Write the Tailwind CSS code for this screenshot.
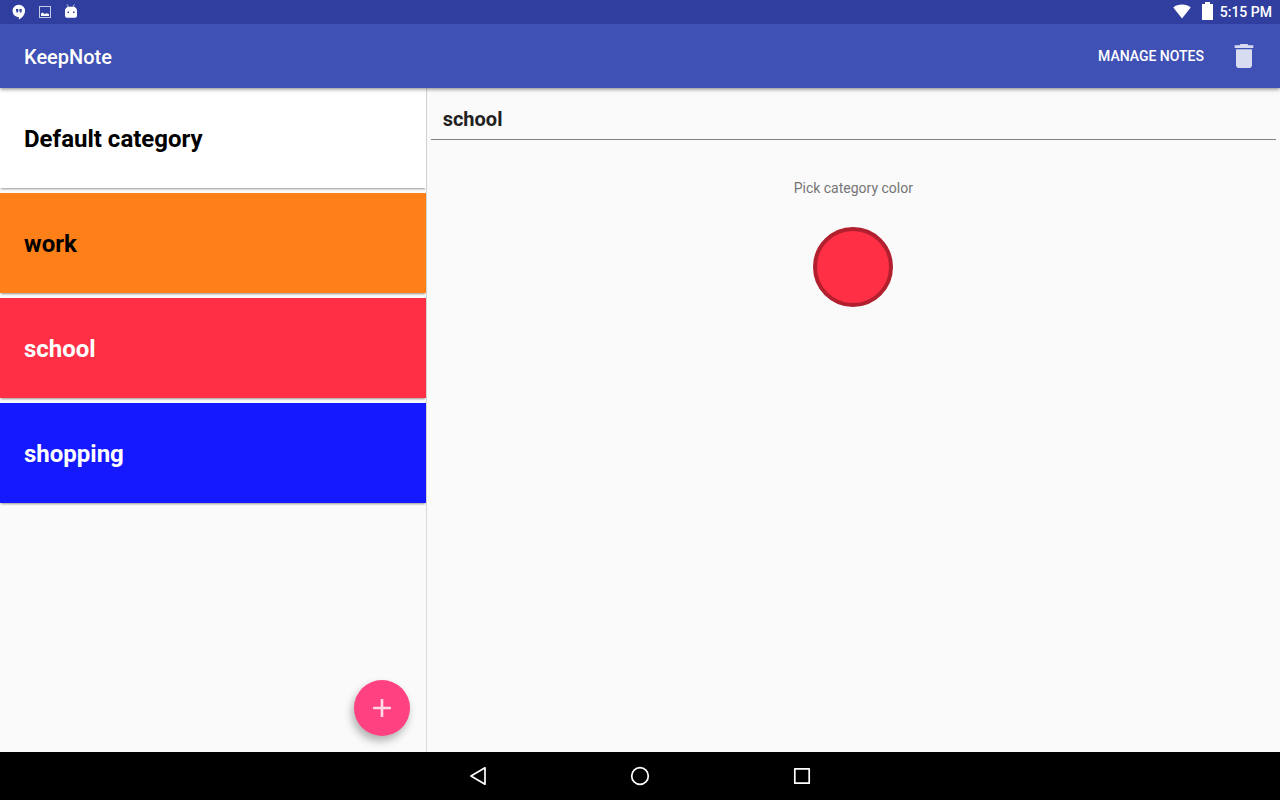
<!DOCTYPE html>
<html lang="en">
<head>
  <meta charset="UTF-8">
  <meta name="viewport" content="width=device-width, initial-scale=1.0">
  <title>KeepNote</title>
  <script src="https://cdn.jsdelivr.net/npm/@tailwindcss/browser@4"></script>
</head>

<body class="font-[Roboto,sans-serif]">
  <div class="h-screen flex flex-col bg-[#fafafa]">

    <!-- status bar -->
    <div class="relative z-20 h-6 shrink-0 flex items-center justify-between pl-3 pr-2 bg-[#303f9f] text-white">
      <div class="flex items-center gap-3">
        <svg class="w-3.5 h-4" viewBox="0 0 14 16" fill="currentColor">
          <path d="M6.800 .8A6 6 0 0 0 .6 7c0 3.400 2.700 6 6.200 6v2.500c3.500-1.700 6.200-4.900 6.200-8.500A6 6 0 0 0 6.800.8z"/>
          <path d="M4 5h2.300v2.500L5.500 8.800h-1L5 7.500H4zM7.400 5h2.300v2.500l-.8 1.300h-1l.5-1.300h-1z" fill="#303f9f"/>
        </svg>
        <svg class="w-3.5 h-4" viewBox="0 0 14 16" fill="none">
          <rect x="1.500" y="2.500" width="11" height="11" stroke="#c5cae9"/>
          <path d="M3 12V9.500l1.500-1L6.500 10l2-.8L11 10v2z" fill="white"/>
        </svg>
        <svg class="w-3.5 h-4" viewBox="0 0 14 16" fill="currentColor">
          <path d="M3.200.5l1.500 3M10.300.5l-1.500 3" stroke="#c5cae9"/>
          <path d="M1 7c0-2.700 1.500-4.300 4-4.300h4c2.500 0 4 1.600 4 4.300v4.500c0 1.500-1 2.300-2.500 2.300h-7C2 13.800 1 13 1 11.500z"/>
          <path d="M3.500 7.500H5V9H3.500zM9 7.500h1.500V9H9z" fill="#303f9f"/>
        </svg>
      </div>
      <div class="flex items-center">
        <svg class="w-[18px] h-4" viewBox="0 0 18 16" fill="currentColor">
          <path d="M9 14.500L.3 3.500C2.600 1.300 5.700.5 9 .5s6.400.8 8.700 3z"/>
        </svg>
        <svg class="w-[11px] h-5 ml-[11px] mr-[7px]" viewBox="0 0 11 20" fill="currentColor">
          <path d="M3 0h5v2h3v16H0V2h3z"/>
        </svg>
        <span class="text-sm font-medium">5:15 PM</span>
      </div>
    </div>

    <!-- app bar -->
    <header class="relative z-10 h-16 shrink-0 flex items-center justify-between pl-6 pr-5 bg-[#3f51b5] text-white shadow-[0_1px_4px_rgba(0,0,0,0.5)]">
      <h1 class="pt-0.5 text-xl font-medium">KeepNote</h1>
      <div class="flex items-center gap-6">
        <button type="button" class="text-sm font-medium">MANAGE NOTES</button>
        <button type="button" aria-label="Delete category">
          <svg class="w-8 h-8" viewBox="0 0 24 24" fill="white" fill-opacity="0.8">
            <path d="M6 19c0 1.100.9 2 2 2h8c1.100 0 2-.9 2-2V7H6v12zM19 4h-3.500l-1-1h-5l-1 1H5v2h14V4z"/>
          </svg>
        </button>
      </div>
    </header>

    <main class="flex-1 min-h-0 flex">
      <!-- categories -->
      <section class="relative w-1/3 shrink-0 border-r border-[#d8d8d8]">
        <ul class="flex flex-col gap-[5px] text-2xl font-bold">
          <li class="shadow-[0_2px_2px_-1px_rgba(0,0,0,0.4)]"><a href="#" class="flex items-center h-[100px] px-6 pt-0.5 bg-white text-black">Default category</a></li>
          <li class="shadow-[0_2px_2px_-1px_rgba(0,0,0,0.4)]"><a href="#" class="flex items-center h-[100px] px-6 pt-0.5 bg-[#ff7f19] text-black">work</a></li>
          <li class="shadow-[0_2px_2px_-1px_rgba(0,0,0,0.4)]"><a href="#" class="flex items-center h-[100px] px-6 pt-0.5 bg-[#ff2f45] text-white">school</a></li>
          <li class="shadow-[0_2px_2px_-1px_rgba(0,0,0,0.4)]"><a href="#" class="flex items-center h-[100px] px-6 pt-0.5 bg-[#1519ff] text-white">shopping</a></li>
        </ul>
        <!-- add button -->
        <button type="button" aria-label="Add category" class="absolute right-4 bottom-4 size-14 rounded-full flex items-center justify-center bg-[#ff4081] shadow-[-2px_5px_8px_rgba(0,0,0,0.3)]">
          <svg class="w-8 h-8" viewBox="0 0 24 24" fill="white" fill-opacity="0.8">
            <path d="M18.700 13H13v5.700h-2V13H5.300v-2H11V5.300h2V11h5.700z"/>
          </svg>
        </button>
      </section>

      <!-- category editor -->
      <form class="flex-1 flex flex-col items-center px-1 pt-2">
        <input type="text" value="school" aria-label="Category name" class="w-full h-11 px-3 pb-1 pt-1.5 border-b border-[#818181] text-xl font-bold text-[#212121] outline-none">
        <label for="color" class="mt-[38px] text-sm text-[#757575]">Pick category color</label>
        <button type="button" id="color" class="mt-[29px] size-20 rounded-full border-4 border-[#b22030] bg-[#ff2f45]"></button>
      </form>
    </main>

    <!-- navigation bar -->
    <nav class="h-12 shrink-0 flex items-center justify-center gap-[138px] bg-black text-white">
      <button type="button" aria-label="Back">
        <svg class="size-6" viewBox="0 0 24 24" fill="none" stroke="currentColor" stroke-width="1.700" stroke-linejoin="round">
          <path d="M19 3.800v16.400L5 12z"/>
        </svg>
      </button>
      <button type="button" aria-label="Home">
        <svg class="size-6" viewBox="0 0 24 24" fill="none" stroke="currentColor" stroke-width="1.700">
          <circle cx="12" cy="12" r="8.300"/>
        </svg>
      </button>
      <button type="button" aria-label="Recent apps">
        <svg class="size-6" viewBox="0 0 24 24" fill="none" stroke="currentColor" stroke-width="1.700" stroke-linejoin="round">
          <rect x="4.800" y="4.800" width="14.400" height="14.400"/>
        </svg>
      </button>
    </nav>

  </div>
</body>
</html>
